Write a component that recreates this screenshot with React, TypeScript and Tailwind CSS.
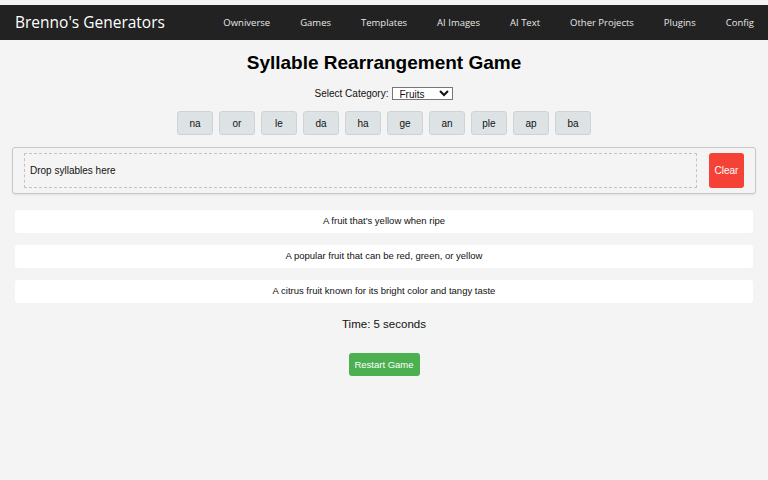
import { useState } from "react";

const links = ["Owniverse", "Games", "Templates", "AI Images", "AI Text", "Other Projects", "Plugins", "Config"];
const syllables = ["na", "or", "le", "da", "ha", "ge", "an", "ple", "ap", "ba"];
const clues = [
  "A fruit that's yellow when ripe",
  "A popular fruit that can be red, green, or yellow",
  "A citrus fruit known for its bright color and tangy taste",
];

export default function App() {
  const [category, setCategory] = useState("Fruits");

  return (
    <div className="min-h-[480px] bg-[#f4f4f4] pt-[5px] font-['Liberation_Sans',Arial,sans-serif] text-[#111]">
      <nav className="flex h-[35px] items-center justify-between bg-[#222] pl-[15px] pr-[14px] pt-[1px] font-['Open_Sans',sans-serif] text-white">
        <span className="text-[15.5px]">Brenno's Generators</span>
        <ul className="flex gap-[30px] text-[9.5px] text-[#e8e8e8]">
          {links.map((l) => (
            <li key={l}>{l}</li>
          ))}
        </ul>
      </nav>

      <h1 className="mt-[12px] text-center text-[19px] font-bold leading-[22px] text-black">Syllable Rearrangement Game</h1>

      <div className="mt-[12px] flex items-center justify-center gap-1 text-[10px]">
        <label>Select Category:</label>
        <select
          value={category}
          onChange={(e) => setCategory(e.target.value)}
          className="h-[13px] w-[61px] border border-[#767676] bg-white pl-[2px] text-[10px] leading-none"
        >
          <option>Fruits</option>
          <option>Animals</option>
          <option>Colors</option>
        </select>
      </div>

      <div className="mt-[10px] flex justify-center gap-[6px]">
        {syllables.map((s) => (
          <div
            key={s}
            className="flex h-[24px] w-[36px] items-center justify-center rounded-[3px] border border-[#ccd4d7] bg-[#dde3e5] text-[10px]"
          >
            {s}
          </div>
        ))}
      </div>

      <div className="mx-[12px] mt-[12px] flex h-[47px] items-center gap-[12px] rounded-[3px] border border-[#c8c8c8] px-[11px] shadow-[0_1px_2px_rgba(0,0,0,0.08)]">
        <div className="flex h-[35px] flex-1 items-center border border-dashed border-[#c4c4c4] pl-[5px] text-[10px]">
          Drop syllables here
        </div>
        <button className="h-[35px] w-[35px] rounded-[3px] bg-[#f44336] text-[10px] text-white">Clear</button>
      </div>

      <div className="mx-[15px] mt-[16px] flex flex-col gap-[12px]">
        {clues.map((c) => (
          <div key={c} className="flex h-[23px] items-center justify-center rounded-[3px] bg-white text-[9.5px]">
            {c}
          </div>
        ))}
      </div>

      <p className="mt-[13px] text-center text-[11.5px]">Time: 5 seconds</p>

      <div className="mt-[20px] flex justify-center">
        <button className="h-[23px] w-[71px] rounded-[3px] bg-[#4caf50] text-[9.5px] text-white">Restart Game</button>
      </div>
    </div>
  );
}
